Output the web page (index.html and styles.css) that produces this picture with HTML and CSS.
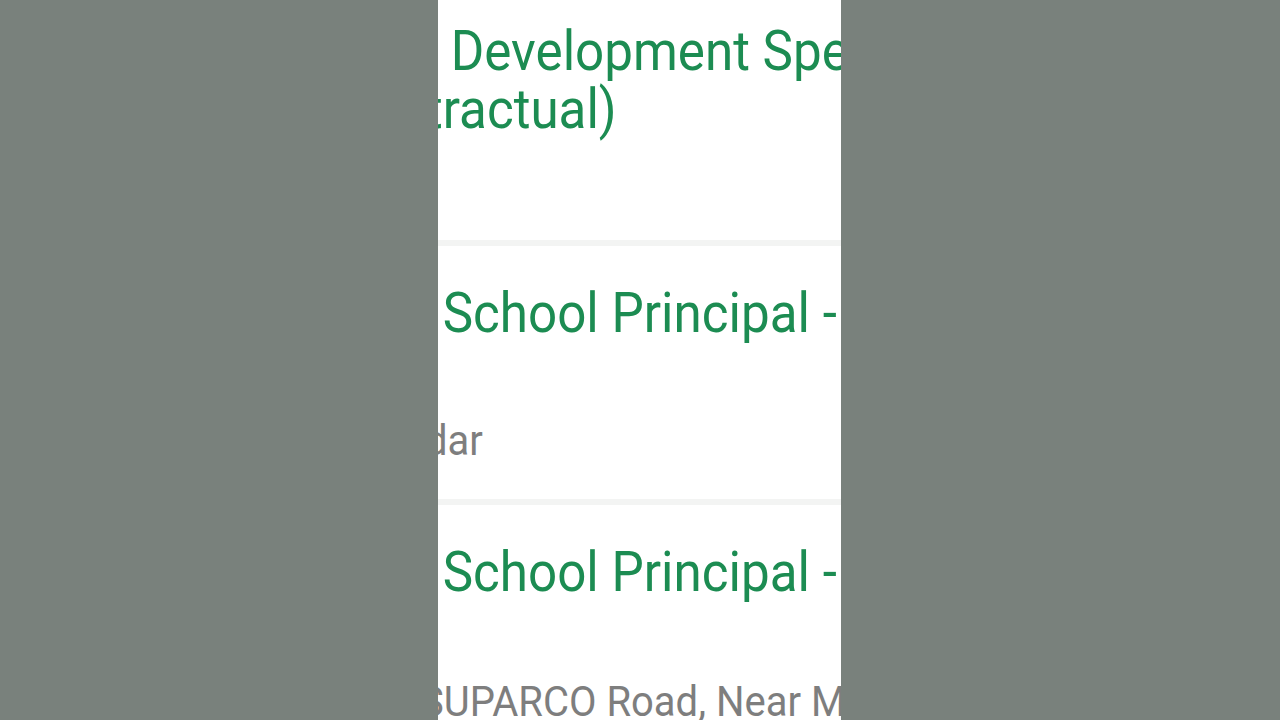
FILE: index.html
```html
<!DOCTYPE html>
<html lang="en">
<head>
<meta charset="utf-8">
<title>Jobs</title>
<link rel="stylesheet" href="styles.css">
</head>
<body>
<main class="panel">
  <article class="card card-first">
    <h2 class="title">
      <span class="line shift-a"><span class="cut">Child</span> Development Specialist</span>
      <span class="line shift-b"><span class="cut">Con</span>tractual)</span>
    </h2>
  </article>
  <article class="card">
    <h2 class="title">
      <span class="line shift-c"><span class="cut">High</span> School Principal - Grade 17</span>
    </h2>
    <p class="meta"><span class="line shift-d"><span class="cut">Gwa</span>dar</span></p>
  </article>
  <article class="card">
    <h2 class="title">
      <span class="line shift-c"><span class="cut">High</span> School Principal - Grade 17</span>
    </h2>
    <p class="meta meta-last"><span class="line shift-e"><span class="cut">Karachi,</span>SUPARCO Road, Near Masjid</span></p>
  </article>
</main>
</body>
</html>
```
FILE: styles.css
```css
html, body {
  margin: 0;
  padding: 0;
}
body {
  background: #79817c;
  height: 720px;
  overflow: hidden;
  display: flex;
  padding-left: 438px;
  font-family: Roboto, "Noto Sans", sans-serif;
}
.panel {
  width: 403px;
  height: 720px;
  background: #f3f4f3;
  overflow: hidden;
  display: flex;
  flex-direction: column;
  gap: 6px;
}
.card {
  background: #ffffff;
  padding: 38px 0 34px;
  flex-shrink: 0;
}
.card-first {
  padding: 22px 0 0;
  height: 218px;
}
.title {
  margin: 0;
  font-size: 55px;
  line-height: 58px;
  font-weight: 400;
  color: #1c8c52;
}
.meta {
  margin: 73px 0 0;
  font-size: 43px;
  line-height: 50px;
  color: #7e7e7e;
}
.meta-last {
  margin-top: 75px;
}
.line {
  display: block;
  white-space: nowrap;
  transform: scaleX(0.93);
  transform-origin: 0 0;
}
.cut {
  display: inline-block;
  width: 0;
  direction: rtl;
}
.shift-a { margin-left: 0; }
.shift-b { margin-left: -12px; }
.shift-c { margin-left: -8px; }
.shift-d { margin-left: -13px; }
.shift-e { margin-left: -18px; }
```
